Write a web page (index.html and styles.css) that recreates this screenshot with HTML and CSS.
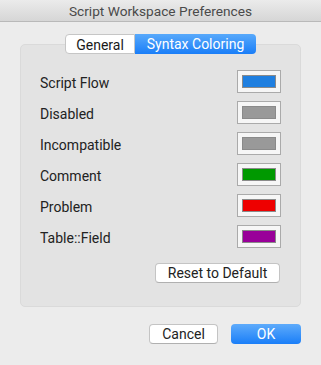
FILE: index.html
```html
<!DOCTYPE html>
<html lang="en">
<head>
    <meta charset="UTF-8">
    <title>Script Workspace Preferences</title>
    <link rel="stylesheet" href="styles.css">
</head>
<body>
    <div class="window">
        <div class="titlebar">Script Workspace Preferences</div>
        <div class="content">
            <div class="tabs">
                <div class="tab">General</div>
                <div class="tab selected">Syntax Coloring</div>
            </div>
            <div class="group">
                <div class="rows">
                    <div class="row">
                        <span>Script Flow</span>
                        <div class="well"><div class="swatch flow"></div></div>
                    </div>
                    <div class="row">
                        <span>Disabled</span>
                        <div class="well"><div class="swatch disabled"></div></div>
                    </div>
                    <div class="row">
                        <span>Incompatible</span>
                        <div class="well"><div class="swatch incompatible"></div></div>
                    </div>
                    <div class="row">
                        <span>Comment</span>
                        <div class="well"><div class="swatch comment"></div></div>
                    </div>
                    <div class="row">
                        <span>Problem</span>
                        <div class="well"><div class="swatch problem"></div></div>
                    </div>
                    <div class="row">
                        <span>Table::Field</span>
                        <div class="well"><div class="swatch field"></div></div>
                    </div>
                </div>
                <div class="reset-row">
                    <button class="btn reset">Reset to Default</button>
                </div>
            </div>
            <div class="actions">
                <button class="btn cancel">Cancel</button>
                <button class="btn ok">OK</button>
            </div>
        </div>
    </div>
</body>
</html>
```

FILE: styles.css
```css
body {
    margin: 0;
    background-color: #ececec;
    font-family: Roboto, "Liberation Sans", sans-serif;
    font-size: 14px;
    color: #222;
}

.window {
    width: 321px;
    height: 365px;
}

.titlebar {
    height: 21px;
    line-height: 22px;
    font-size: 13.7px;
    text-align: center;
    color: #4a4a4a;
    background: linear-gradient(#ebebeb, #d6d6d6);
    border-bottom: 1px solid #b9b9b9;
}

.content {
    padding: 12px 20px 0 20px;
}

.tabs {
    display: flex;
    justify-content: center;
    position: relative;
    z-index: 1;
    margin-bottom: -10px;
}

.tab {
    height: 20px;
    line-height: 20px;
    background-color: #fff;
    border: 1px solid #c6c6c6;
    border-radius: 4px 0 0 4px;
    box-sizing: border-box;
    width: 70px;
    text-align: center;
    color: #1a1a1a;
}

.tab.selected {
    width: 121px;
    border: none;
    border-radius: 0 4px 4px 0;
    background: linear-gradient(#58a9fb, #1a7ef8);
    color: #fff;
}

.group {
    height: 261px;
    background-color: #e3e3e3;
    border: 1px solid #dadada;
    border-radius: 5px;
    padding: 0 19px;
}

.rows {
    padding-top: 25px;
    display: flex;
    flex-direction: column;
    gap: 8px;
}

.row {
    display: flex;
    align-items: center;
    justify-content: space-between;
    height: 23px;
}

.row span {
    padding-top: 3px;
}

.well {
    width: 44px;
    height: 23px;
    box-sizing: border-box;
    border: 1px solid #aaa;
    background-color: #f6f6f6;
    padding: 4px;
}

.swatch {
    height: 13px;
    box-sizing: border-box;
    border: 1px solid #8a8a8a;
}

.flow { background-color: #1f7fe0; }
.disabled { background-color: #999; }
.incompatible { background-color: #999; }
.comment { background-color: #009900; }
.problem { background-color: #ee0000; }
.field { background-color: #990099; }

.reset-row {
    display: flex;
    justify-content: flex-end;
    margin-top: 15px;
    padding-right: 1px;
}

.btn {
    height: 20px;
    box-sizing: border-box;
    font-family: Roboto, "Liberation Sans", sans-serif;
    font-size: 14px;
    color: #222;
    background-color: #fff;
    border: 1px solid #c4c4c4;
    border-bottom-color: #b0b0b0;
    border-radius: 4px;
    padding: 0;
}

.reset {
    width: 125px;
}

.actions {
    display: flex;
    justify-content: flex-end;
    gap: 13px;
    margin-top: 17px;
}

.cancel {
    width: 69px;
}

.ok {
    width: 70px;
    border: none;
    color: #fff;
    background: linear-gradient(#5eabfb, #1a7ef8);
}
```
